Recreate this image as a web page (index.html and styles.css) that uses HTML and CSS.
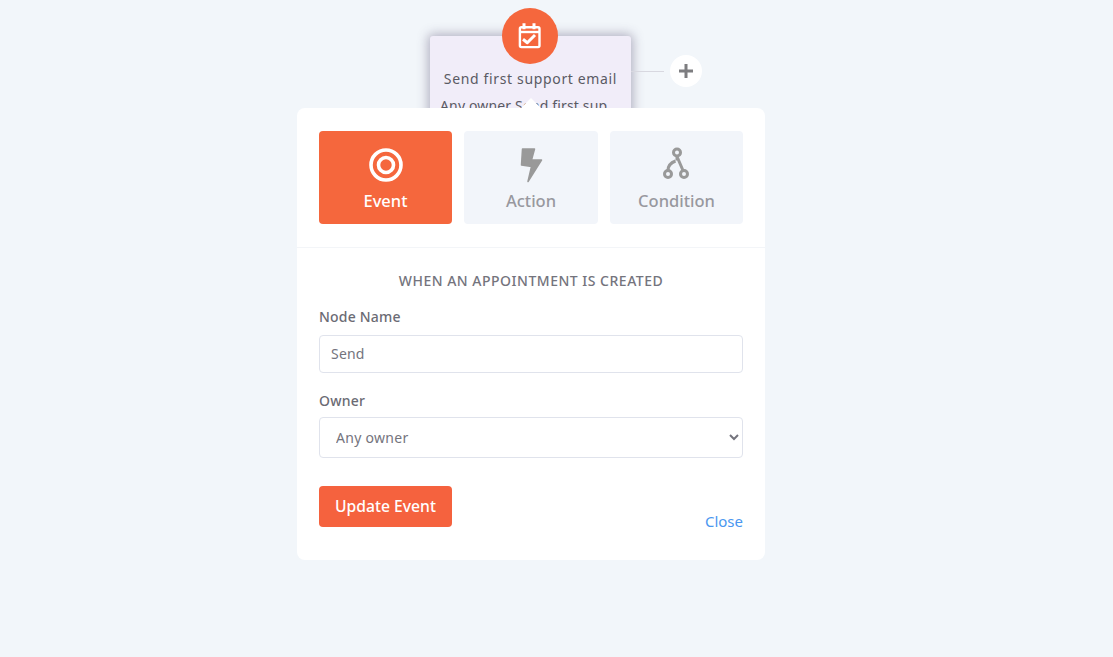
FILE: index.html
```html
<!DOCTYPE html>
<html lang="en">
<head>
<meta charset="utf-8">
<title>Workflow node</title>
<link rel="stylesheet" href="styles.css">
</head>
<body>
<div class="node">
  <div class="node-icon">
    <svg width="26" height="28" viewBox="0 0 26 28" fill="none" stroke="#fff" stroke-width="2.4" stroke-linejoin="round">
      <rect x="2.900" y="5.200" width="19.600" height="19.900" rx="1.500"/>
      <path d="M2.900 10h19.600"/>
      <path d="M7 1.300v6M17 1.300v6" stroke-width="3"/>
      <path d="M6 17.300l4.300 3.400 7.700-7.700" stroke-width="3"/>
    </svg>
  </div>
  <div class="node-title">Send first support email</div>
  <div class="node-desc">Any owner Send first sup</div>
  <div class="node-notch"></div>
</div>
<div class="connector"></div>
<div class="add-btn">
  <svg width="16" height="16" viewBox="0 0 16 16"><path d="M8 1v14M1 8h14" stroke="#7d7d80" stroke-width="3"/></svg>
</div>
<main class="panel">
  <div class="tabs">
    <div class="tab tab-active">
      <svg class="tab-icon" width="36" height="36" viewBox="0 0 36 36" fill="none" stroke="#fff">
        <circle cx="18" cy="18" r="15" stroke-width="3.600"/>
        <circle cx="18" cy="18" r="7.500" stroke-width="3.600"/>
      </svg>
      <span>Event</span>
    </div>
    <div class="tab">
      <svg class="tab-icon" width="36" height="36" viewBox="0 0 36 36" fill="#999">
        <path d="M9.500 2h12l-3 11h10L15 34.500l3.500-15L8.500 18z" stroke="#999" stroke-width="1.500" stroke-linejoin="round"/>
      </svg>
      <span>Action</span>
    </div>
    <div class="tab">
      <svg class="tab-icon" width="36" height="36" viewBox="0 0 36 36" fill="none" stroke="#999" stroke-width="3">
        <circle cx="18" cy="5.500" r="3.500"/>
        <circle cx="9" cy="27" r="3.500"/>
        <circle cx="25" cy="27" r="3.500"/>
        <path d="M18 9v4.500M16.500 14C11 16 9 19 9 23.500M18 9.500L24 23.500"/>
      </svg>
      <span>Condition</span>
    </div>
  </div>
  <div class="form">
    <h2 class="form-title">WHEN AN APPOINTMENT IS CREATED</h2>
    <label class="field-label" for="node-name">Node Name</label>
    <input class="text-input" id="node-name" type="text" value="Send">
    <label class="field-label owner-label" for="owner">Owner</label>
    <select class="select-input" id="owner"><option>Any owner</option></select>
    <div class="actions">
      <button class="submit" type="button">Update Event</button>
      <a class="close" href="#">Close</a>
    </div>
  </div>
</main>
</body>
</html>
```
FILE: styles.css
```css
* { box-sizing: border-box; }
html, body { margin: 0; height: 100%; }
body {
  position: relative;
  background: #f2f6fa;
  font-family: "Noto Sans", "Open Sans", sans-serif;
  color: #6b6b74;
  overflow: hidden;
  padding: 108px 0 0 297px;
}
.node {
  position: absolute;
  left: 430px;
  top: 36px;
  width: 201px;
  height: 90px;
  background: #f1edf9;
  border-radius: 3px;
  box-shadow: 0 0 11px 2px rgba(70, 60, 100, .38);
  text-align: center;
}
.node-icon {
  position: absolute;
  left: 72px;
  top: -28px;
  width: 56px;
  height: 56px;
  border-radius: 50%;
  background: #f5673d;
  display: flex;
  align-items: center;
  justify-content: center;
}
.node-title {
  position: absolute;
  left: 0;
  right: 0;
  top: 33px;
  font-size: 14px;
  line-height: 20px;
  letter-spacing: .65px;
  color: #5a5a64;
}
.node-desc {
  position: absolute;
  left: 10px;
  top: 60px;
  font-size: 14px;
  line-height: 20px;
  letter-spacing: .15px;
  color: #5a5a64;
  white-space: nowrap;
}
.node-notch {
  position: absolute;
  left: 94px;
  top: 65px;
  width: 14px;
  height: 14px;
  background: #fff;
  transform: rotate(45deg);
}
.connector {
  position: absolute;
  left: 631px;
  top: 71px;
  width: 33px;
  height: 1px;
  background: #d8d8e0;
}
.add-btn {
  position: absolute;
  left: 670px;
  top: 55px;
  width: 32px;
  height: 32px;
  border-radius: 50%;
  background: #fff;
  display: flex;
  align-items: center;
  justify-content: center;
}
.panel {
  position: relative;
  width: 468px;
  height: 452px;
  background: #fff;
  border-radius: 8px;
}
.tabs {
  display: grid;
  grid-template-columns: 133px 134px 133px;
  gap: 12px;
  padding: 23px 22px;
  border-bottom: 1px solid #f3f5f8;
  height: 140px;
}
.tab {
  height: 93px;
  border-radius: 4px;
  background: #f2f5fa;
  color: #98989e;
  font-size: 16.500px;
  font-weight: 500;
  display: flex;
  flex-direction: column;
  align-items: center;
  padding-top: 16px;
}
.tab-active {
  background: #f5673d;
  color: #fff;
}
.tab-icon { display: block; margin-bottom: 7px; }
.tab span { line-height: 22px; }
.form { padding: 0 22px; }
.form-title {
  margin: 23px 0 0;
  font-size: 14px;
  font-weight: 500;
  line-height: 20px;
  letter-spacing: .5px;
  text-align: center;
  color: #74747d;
}
.field-label {
  display: block;
  margin-top: 16px;
  font-size: 14px;
  font-weight: 500;
  line-height: 20px;
  letter-spacing: .2px;
  color: #6b6b74;
}
.text-input {
  display: block;
  width: 100%;
  height: 38px;
  margin-top: 8px;
  padding: 0 11px 2px;
  border: 1px solid #e0e3ec;
  border-radius: 4px;
  background: #fff;
  font: 14px "Noto Sans", sans-serif;
  letter-spacing: .2px;
  color: #74747d;
  outline: none;
}
.owner-label { margin-top: 18px; }
.select-input {
  display: block;
  width: 100%;
  height: 41px;
  margin-top: 6px;
  padding: 0 12px;
  border: 1px solid #e0e3ec;
  border-radius: 4px;
  background: #fff;
  font: 14px "Noto Sans", sans-serif;
  letter-spacing: .3px;
  color: #74747d;
}
.actions {
  display: flex;
  justify-content: space-between;
  align-items: flex-end;
  margin-top: 28px;
}
.submit {
  width: 133px;
  height: 41px;
  padding: 0 0 2px;
  border: 0;
  border-radius: 4px;
  background: #f5623e;
  color: #fff;
  font: 500 15.700px "Noto Sans", sans-serif;
}
.close {
  color: #4a97f0;
  font-size: 15px;
  line-height: 20px;
  text-decoration: none;
  position: relative;
  top: 4px;
}
```
